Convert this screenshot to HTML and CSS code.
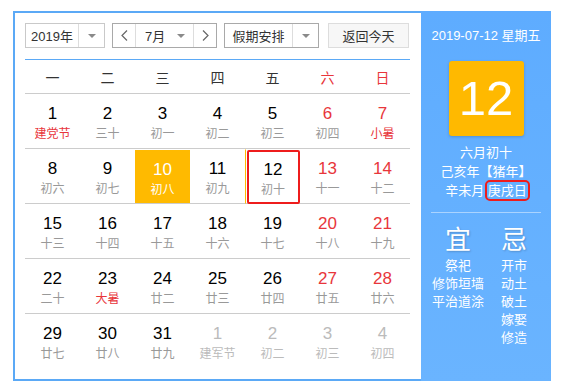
FILE: index.html
```html
<!DOCTYPE html>
<html lang="zh-CN">
<head>
<meta charset="utf-8">
<title>万年历</title>
<link rel="stylesheet" href="styles.css">
</head>
<body>
<div class="cal">
  <div class="main">
    <div class="toolbar">
      <div class="sel sel-year">
        <span class="sel-text">2019年</span>
        <span class="sel-arrow"><i class="tri"></i></span>
      </div>
      <div class="month">
        <span class="nav"><svg width="7" height="11" viewBox="0 0 7 11"><polyline points="6,0.5 1,5.5 6,10.5" fill="none" stroke="#666" stroke-width="1.2"/></svg></span>
        <span class="month-text"><span>7月</span><i class="tri"></i></span>
        <span class="nav"><svg width="7" height="11" viewBox="0 0 7 11"><polyline points="1,0.5 6,5.5 1,10.5" fill="none" stroke="#666" stroke-width="1.2"/></svg></span>
      </div>
      <div class="sel sel-hol">
        <span class="sel-text">假期安排</span>
        <span class="sel-arrow"><i class="tri"></i></span>
      </div>
      <button class="today-btn">返回今天</button>
    </div>
    <div class="grid">
      <div class="wk">一</div><div class="wk">二</div><div class="wk">三</div><div class="wk">四</div><div class="wk">五</div><div class="wk red">六</div><div class="wk red">日</div>

      <div class="day"><span class="n">1</span><span class="l red">建党节</span></div>
      <div class="day"><span class="n">2</span><span class="l">三十</span></div>
      <div class="day"><span class="n">3</span><span class="l">初一</span></div>
      <div class="day"><span class="n">4</span><span class="l">初二</span></div>
      <div class="day"><span class="n">5</span><span class="l">初三</span></div>
      <div class="day"><span class="n red">6</span><span class="l">初四</span></div>
      <div class="day"><span class="n red">7</span><span class="l red">小暑</span></div>

      <div class="day"><span class="n">8</span><span class="l">初六</span></div>
      <div class="day"><span class="n">9</span><span class="l">初七</span></div>
      <div class="day sel-day"><span class="n">10</span><span class="l">初八</span></div>
      <div class="day"><span class="n">11</span><span class="l">初九</span></div>
      <div class="day cur"><span class="n">12</span><span class="l">初十</span></div>
      <div class="day"><span class="n red">13</span><span class="l">十一</span></div>
      <div class="day"><span class="n red">14</span><span class="l">十二</span></div>

      <div class="day"><span class="n">15</span><span class="l">十三</span></div>
      <div class="day"><span class="n">16</span><span class="l">十四</span></div>
      <div class="day"><span class="n">17</span><span class="l">十五</span></div>
      <div class="day"><span class="n">18</span><span class="l">十六</span></div>
      <div class="day"><span class="n">19</span><span class="l">十七</span></div>
      <div class="day"><span class="n red">20</span><span class="l">十八</span></div>
      <div class="day"><span class="n red">21</span><span class="l">十九</span></div>

      <div class="day"><span class="n">22</span><span class="l">二十</span></div>
      <div class="day"><span class="n">23</span><span class="l red">大暑</span></div>
      <div class="day"><span class="n">24</span><span class="l">廿二</span></div>
      <div class="day"><span class="n">25</span><span class="l">廿三</span></div>
      <div class="day"><span class="n">26</span><span class="l">廿四</span></div>
      <div class="day"><span class="n red">27</span><span class="l">廿五</span></div>
      <div class="day"><span class="n red">28</span><span class="l">廿六</span></div>

      <div class="day last"><span class="n">29</span><span class="l">廿七</span></div>
      <div class="day last"><span class="n">30</span><span class="l">廿八</span></div>
      <div class="day last"><span class="n">31</span><span class="l">廿九</span></div>
      <div class="day last other"><span class="n">1</span><span class="l">建军节</span></div>
      <div class="day last other"><span class="n">2</span><span class="l">初二</span></div>
      <div class="day last other"><span class="n">3</span><span class="l">初三</span></div>
      <div class="day last other"><span class="n">4</span><span class="l">初四</span></div>
    </div>
  </div>
  <div class="side">
    <div class="side-date">2019-07-12 星期五</div>
    <div class="big-day">12</div>
    <div class="lunar">
      <div>六月初十</div>
      <div>己亥年【猪年】</div>
      <div>辛未月 <span class="mark">庚戌日</span></div>
    </div>
    <div class="sep"></div>
    <div class="yj">
      <div class="yj-col">
        <div class="yj-head">宜</div>
        <div>祭祀</div>
        <div>修饰垣墙</div>
        <div>平治道涂</div>
      </div>
      <div class="yj-col">
        <div class="yj-head">忌</div>
        <div>开市</div>
        <div>动土</div>
        <div>破土</div>
        <div>嫁娶</div>
        <div>修造</div>
      </div>
    </div>
  </div>
</div>
</body>
</html>
```

FILE: styles.css
```css
* { box-sizing: border-box; }
html, body { margin: 0; background: #fff; }
body {
  padding: 11px 0 0 13px;
  font-family: "Liberation Sans", "Noto Sans CJK SC", sans-serif;
  color: #000;
}
.cal {
  display: flex;
  width: 538px;
  height: 370px;
}
.main {
  width: 408px;
  height: 370px;
  border: 2px solid #5ba9f6;
  border-right: none;
  padding: 10px 11px 0 10px;
}
.toolbar {
  display: flex;
  height: 25px;
  font-size: 13px;
  color: #333;
  white-space: nowrap;
}
.sel {
  display: flex;
  height: 25px;
  border: 1px solid #c9c9c9;
  background: #fff;
}
.sel-year { width: 80px; }
.sel-hol { width: 95px; margin-left: 7px; border-color: #a9a9a9; }
.sel-text {
  flex: 1;
  display: flex;
  align-items: center;
  justify-content: center;
  border-right: 1px solid #ddd;
}
.sel-arrow {
  width: 25px;
  display: flex;
  align-items: center;
  justify-content: center;
}
.tri {
  display: inline-block;
  width: 0;
  height: 0;
  border-left: 4px solid transparent;
  border-right: 4px solid transparent;
  border-top: 4px solid #8a8a8a;
}
.month {
  display: flex;
  width: 105px;
  height: 25px;
  margin-left: 7px;
  border: 1px solid #a9a9a9;
}
.nav {
  width: 22px;
  flex: none;
  display: flex;
  align-items: center;
  justify-content: center;
}
.month-text {
  flex: 1;
  display: flex;
  align-items: center;
  justify-content: space-between;
  border-left: 1px solid #ddd;
  border-right: 1px solid #ddd;
  padding: 0 8px 0 9px;
}
.today-btn {
  margin-left: 9px;
  width: 81px;
  height: 25px;
  border: 1px solid #ddd;
  background: #f7f7f7;
  font: inherit;
  color: #333;
  padding: 0;
}
.grid {
  margin-top: 11px;
  border-top: 1px solid #5ba9f6;
  display: grid;
  grid-template-columns: repeat(7, 55px);
}
.wk {
  height: 34px;
  border-bottom: 1px solid #ccc;
  display: flex;
  align-items: center;
  justify-content: center;
  font-size: 14px;
  color: #333;
  font-family: "Noto Sans CJK SC", sans-serif;
}
.day {
  height: 55px;
  border-bottom: 1px solid #ccc;
  display: flex;
  flex-direction: column;
  align-items: center;
  padding-top: 10px;
  position: relative;
}
.day.last { border-bottom: none; }
.n {
  font-size: 17px;
  line-height: 20px;
  color: #000;
}
.l {
  font-size: 12px;
  line-height: 18px;
  color: #999;
  font-family: "Noto Sans CJK SC", sans-serif;
}
.red, .n.red, .l.red { color: #e8363b; }
.wk.red { color: #e8363b; }
.other .n, .other .l { color: #bbb; }
.sel-day {
  background: #ffba00;
  border-top: 1px solid #fff;
}
.sel-day .n, .sel-day .l { color: #fff; }
.cur { border-left: 1px solid #ffba00; border-top: 1px solid #fff; }
.cur::after {
  content: "";
  position: absolute;
  left: 1px;
  top: 0;
  right: 0;
  bottom: -1px;
  border: 2.5px solid #ee1c1c;
  border-radius: 2px;
}
.side {
  width: 130px;
  height: 370px;
  background: linear-gradient(#5eacff, #6ab4ff);
  color: #fff;
  font-family: "Liberation Sans", "Noto Sans CJK SC", sans-serif;
  display: flex;
  flex-direction: column;
  align-items: center;
  padding-top: 16px;
}
.side-date {
  font-size: 13px;
  line-height: 18px;
}
.big-day {
  margin-top: 16px;
  width: 75px;
  height: 75px;
  background: #ffb900;
  border-radius: 3px;
  box-shadow: 0 1px 3px rgba(0,0,0,0.18);
  font-size: 49px;
  line-height: 75px;
  text-align: center;
  color: #fff;
}
.lunar {
  margin-top: 7px;
  font-size: 13px;
  line-height: 19px;
  text-align: center;
}
.mark {
  outline: 2.5px solid #ee1c1c;
  outline-offset: 1px;
  border-radius: 2px;
}
.sep {
  margin-top: 12px;
  width: 110px;
  height: 1px;
  background: rgba(255,255,255,0.45);
}
.yj {
  align-self: stretch;
  display: grid;
  grid-template-columns: 62px 50px;
  padding-left: 6px;
  margin-top: 12px;
  font-size: 13px;
  line-height: 18px;
}
.yj-col {
  display: flex;
  flex-direction: column;
  align-items: center;
}
.yj-head {
  font-size: 26px;
  line-height: 30px;
  margin-bottom: 2px;
  text-shadow: 1px 1px 2px rgba(0,0,0,0.2);
}
```
